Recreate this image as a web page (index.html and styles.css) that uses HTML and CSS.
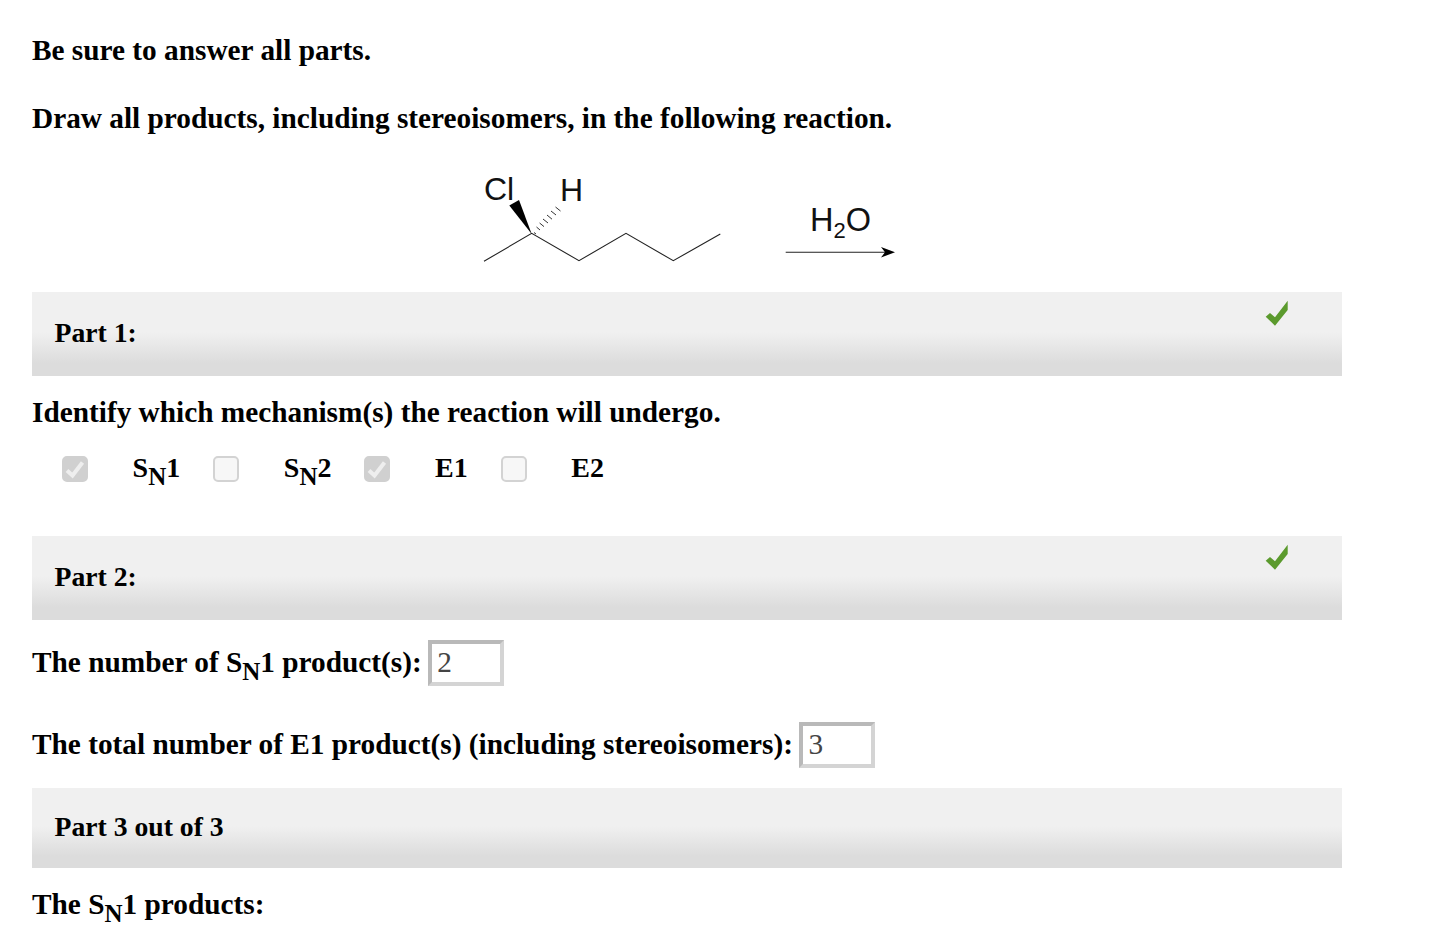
FILE: index.html
```html
<!DOCTYPE html>
<html lang="en">
<head>
<meta charset="utf-8">
<title>Reaction question</title>
<link rel="stylesheet" href="styles.css">
</head>
<body>
<main class="page">
  <p class="line intro">Be sure to answer all parts.</p>
  <p class="line prompt">Draw all products, including stereoisomers, in the following reaction.</p>
  <svg class="scheme" width="440" height="120" viewBox="470 160 440 120" role="img" aria-label="2-chlorohexane with water">
    <polyline class="bond" points="484,261.3 531.7,233.3 579,260.7 626,233.3 673.3,260.7 720.3,234"/>
    <polygon points="531.7,234 509.3,205.5 519,200"/>
    <g class="hash">
      <path d="M534 232.5l2 1.5M536.5 227l3.5 3M539.6 223l4.4 3.6M543 219l5 4M547 215l5 4.2M551 211l5 4M555.5 207l5 4"/>
    </g>
    <text class="atom" x="484" y="200">Cl</text>
    <text class="atom" x="560" y="201">H</text>
    <text class="atom reagent" x="810" y="231">H<tspan class="sub" dy="7">2</tspan><tspan dy="-7">O</tspan></text>
    <line class="bond" x1="785.7" y1="252.3" x2="888" y2="252.3"/>
    <polygon points="895,252.3 881,247 885,252.3 881,257.5"/>
  </svg>

  <section class="bar part1">
    <h2 class="bar-title">Part 1:</h2>
    <svg class="tick" width="24" height="28" viewBox="0 0 24 28"><polygon points="0.7,16.7 5,13 10,17.3 22.7,0.7 22.7,10 10,25.7"/></svg>
  </section>
  <p class="line ask">Identify which mechanism(s) the reaction will undergo.</p>
  <div class="choices">
    <span class="box checked"><svg width="26" height="26" viewBox="0 0 26 26"><path d="M5 14.5l5.5 5 10-13"/></svg></span>
    <span class="choice">S<sub>N</sub>1</span>
    <span class="box"></span>
    <span class="choice">S<sub>N</sub>2</span>
    <span class="box checked"><svg width="26" height="26" viewBox="0 0 26 26"><path d="M5 14.5l5.5 5 10-13"/></svg></span>
    <span class="choice">E1</span>
    <span class="box"></span>
    <span class="choice">E2</span>
  </div>

  <section class="bar part2">
    <h2 class="bar-title">Part 2:</h2>
    <svg class="tick" width="24" height="28" viewBox="0 0 24 28"><polygon points="0.7,16.7 5,13 10,17.3 22.7,0.7 22.7,10 10,25.7"/></svg>
  </section>
  <div class="line field first-field"><span class="field-label">The number of S<sub>N</sub>1 product(s):</span><span class="answer">2</span></div>
  <div class="line field"><span class="field-label">The total number of E1 product(s) (including stereoisomers):</span><span class="answer">3</span></div>

  <section class="bar part3">
    <h2 class="bar-title">Part 3 out of 3</h2>
  </section>
  <p class="line products">The S<sub>N</sub>1 products:</p>
</main>
</body>
</html>
```

FILE: styles.css
```css
html, body {
  margin: 0;
  padding: 0;
  height: 940px;
  overflow: hidden;
  background: #fff;
}
.page {
  padding: 32px 0 0 32px;
  width: 1310px;
  font-family: "Liberation Serif", "Times New Roman", serif;
  font-size: 29.3px;
  font-weight: 700;
  color: #000;
}
.line {
  margin: 0;
  line-height: 36px;
}
.prompt { margin-top: 32px; }
.scheme {
  display: block;
  margin: 24px 0 12px 438px;
}
.bond {
  fill: none;
  stroke: #222;
  stroke-width: 1.1;
}
.hash path {
  fill: none;
  stroke: #333;
  stroke-width: 1;
}
.atom {
  font-family: "Liberation Sans", Arial, sans-serif;
  font-size: 32px;
  font-weight: 400;
  fill: #111;
}
.reagent { font-size: 32.5px; }
.sub { font-size: 22px; }

.bar {
  display: flex;
  justify-content: space-between;
  align-items: flex-start;
  height: 84px;
  box-sizing: border-box;
  padding: 23px 53px 0 22.5px;
  background: linear-gradient(#f0f0f0 0, #f0f0f0 48%, #dcdcdc 85%, #dcdcdc 100%);
}
.bar-title {
  margin: 0;
  font-size: 27.7px;
  line-height: 36px;
  font-weight: 700;
}
.tick {
  display: block;
  margin-top: -15px;
  fill: #5b9a2d;
}
.part3 {
  height: 80px;
  margin-top: 20px;
  padding-top: 21px;
}

.ask { margin-top: 18px; }
.choices {
  display: flex;
  align-items: flex-start;
  margin: 26px 0 0 30px;
  height: 80px;
  font-size: 28px;
}
.box {
  flex: none;
  box-sizing: border-box;
  width: 26px;
  height: 26px;
  margin-right: 44.6px;
  border: 2px solid #d3d3d3;
  border-radius: 5px;
  background: #f7f7f7;
}
.box.checked {
  background: #d0d0d0;
  border-color: #d0d0d0;
}
.box svg {
  display: block;
  margin: -2px;
  fill: none;
  stroke: #eeeeee;
  stroke-width: 4;
}
.choice {
  margin-right: 33px;
  line-height: 24px;
}
sub {
  font-size: 25px;
  line-height: 0;
  vertical-align: -8px;
}
.field {
  display: flex;
  align-items: center;
  height: 46px;
}
.field-label { margin-top: -2px; }
.first-field { margin-top: 20px; }
.field + .field { margin-top: 36px; }
.answer {
  box-sizing: border-box;
  width: 76px;
  height: 46px;
  margin-left: 6.5px;
  padding-left: 5px;
  border: 4px solid;
  border-color: #b9b9b9 #d4d4d4 #d4d4d4 #b9b9b9;
  font-weight: 400;
  color: #444;
  line-height: 36px;
}
.products { margin-top: 18px; }
```
